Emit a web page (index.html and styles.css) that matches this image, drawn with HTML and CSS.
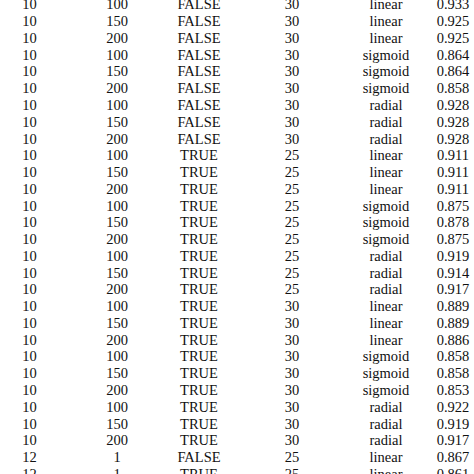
FILE: index.html
```html
<!DOCTYPE html>
<html>
<head>
<meta charset="utf-8">
<link rel="stylesheet" href="styles.css">
</head>
<body>
<table class="results">
<colgroup>
<col class="c1"><col class="c2"><col class="c3"><col class="c4"><col class="c5"><col class="c6">
</colgroup>
<tbody>
<tr><td>10</td><td>100</td><td>FALSE</td><td>30</td><td>linear</td><td>0.933</td></tr>
<tr><td>10</td><td>150</td><td>FALSE</td><td>30</td><td>linear</td><td>0.925</td></tr>
<tr><td>10</td><td>200</td><td>FALSE</td><td>30</td><td>linear</td><td>0.925</td></tr>
<tr><td>10</td><td>100</td><td>FALSE</td><td>30</td><td>sigmoid</td><td>0.864</td></tr>
<tr><td>10</td><td>150</td><td>FALSE</td><td>30</td><td>sigmoid</td><td>0.864</td></tr>
<tr><td>10</td><td>200</td><td>FALSE</td><td>30</td><td>sigmoid</td><td>0.858</td></tr>
<tr><td>10</td><td>100</td><td>FALSE</td><td>30</td><td>radial</td><td>0.928</td></tr>
<tr><td>10</td><td>150</td><td>FALSE</td><td>30</td><td>radial</td><td>0.928</td></tr>
<tr><td>10</td><td>200</td><td>FALSE</td><td>30</td><td>radial</td><td>0.928</td></tr>
<tr><td>10</td><td>100</td><td>TRUE</td><td>25</td><td>linear</td><td>0.911</td></tr>
<tr><td>10</td><td>150</td><td>TRUE</td><td>25</td><td>linear</td><td>0.911</td></tr>
<tr><td>10</td><td>200</td><td>TRUE</td><td>25</td><td>linear</td><td>0.911</td></tr>
<tr><td>10</td><td>100</td><td>TRUE</td><td>25</td><td>sigmoid</td><td>0.875</td></tr>
<tr><td>10</td><td>150</td><td>TRUE</td><td>25</td><td>sigmoid</td><td>0.878</td></tr>
<tr><td>10</td><td>200</td><td>TRUE</td><td>25</td><td>sigmoid</td><td>0.875</td></tr>
<tr><td>10</td><td>100</td><td>TRUE</td><td>25</td><td>radial</td><td>0.919</td></tr>
<tr><td>10</td><td>150</td><td>TRUE</td><td>25</td><td>radial</td><td>0.914</td></tr>
<tr><td>10</td><td>200</td><td>TRUE</td><td>25</td><td>radial</td><td>0.917</td></tr>
<tr><td>10</td><td>100</td><td>TRUE</td><td>30</td><td>linear</td><td>0.889</td></tr>
<tr><td>10</td><td>150</td><td>TRUE</td><td>30</td><td>linear</td><td>0.889</td></tr>
<tr><td>10</td><td>200</td><td>TRUE</td><td>30</td><td>linear</td><td>0.886</td></tr>
<tr><td>10</td><td>100</td><td>TRUE</td><td>30</td><td>sigmoid</td><td>0.858</td></tr>
<tr><td>10</td><td>150</td><td>TRUE</td><td>30</td><td>sigmoid</td><td>0.858</td></tr>
<tr><td>10</td><td>200</td><td>TRUE</td><td>30</td><td>sigmoid</td><td>0.853</td></tr>
<tr><td>10</td><td>100</td><td>TRUE</td><td>30</td><td>radial</td><td>0.922</td></tr>
<tr><td>10</td><td>150</td><td>TRUE</td><td>30</td><td>radial</td><td>0.919</td></tr>
<tr><td>10</td><td>200</td><td>TRUE</td><td>30</td><td>radial</td><td>0.917</td></tr>
<tr><td>12</td><td>1</td><td>FALSE</td><td>25</td><td>linear</td><td>0.867</td></tr>
<tr><td>12</td><td>1</td><td>TRUE</td><td>25</td><td>linear</td><td>0.861</td></tr>
</tbody>
</table>
</body>
</html>
```

FILE: styles.css
```css
html, body {
  margin: 0;
  padding: 0;
  background: #ffffff;
  overflow: hidden;
}

body {
  width: 474px;
  height: 474px;
  font-family: "Liberation Serif", "Times New Roman", serif;
  font-size: 14.5px;
  color: #111111;
}

.results {
  border-collapse: collapse;
  border-spacing: 0;
  table-layout: fixed;
  width: 495px;
  margin-left: -10px;
  margin-top: -3.6px;
}

.results td {
  padding: 0;
  text-align: center;
  line-height: 16.76px;
  height: 16.76px;
  white-space: nowrap;
}

.c1 { width: 79px; }
.c2 { width: 96px; }
.c3 { width: 68px; }
.c4 { width: 118px; }
.c5 { width: 70px; }
.c6 { width: 64px; }
```
